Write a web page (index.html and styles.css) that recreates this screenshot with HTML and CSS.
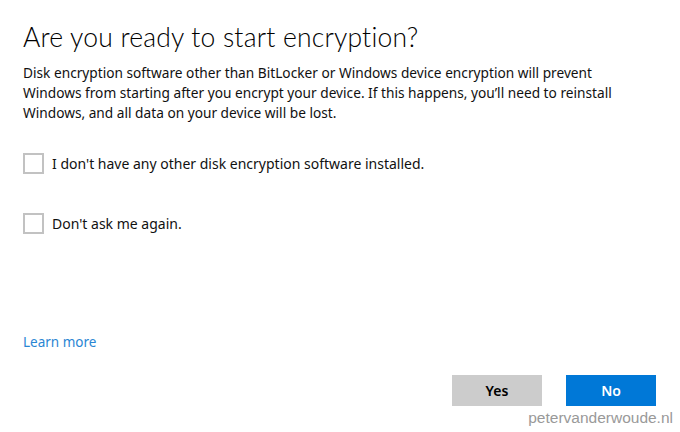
FILE: index.html
```html
<!DOCTYPE html>
<html>
<head>
<meta charset="utf-8">
<link rel="stylesheet" href="styles.css">
</head>
<body>
<div class="dialog">
  <h1 class="title">Are you ready to start encryption?</h1>
  <p class="desc">Disk encryption software other than BitLocker or Windows device encryption will prevent Windows from starting after you encrypt your device. If this happens, you’ll need to reinstall Windows, and all data on your device will be lost.</p>
  <div class="checks">
    <label class="check"><span class="box"></span><span class="label">I don't have any other disk encryption software installed.</span></label>
    <label class="check"><span class="box"></span><span class="label">Don't ask me again.</span></label>
  </div>
  <a class="learn" href="#">Learn more</a>
  <div class="buttons">
    <button class="btn btn-yes">Yes</button>
    <button class="btn btn-no">No</button>
  </div>
  <div class="watermark">petervanderwoude.nl</div>
</div>
</body>
</html>
```
FILE: styles.css
```css
html, body {
  margin: 0;
  padding: 0;
  background: #ffffff;
}
.dialog {
  width: 680px;
  height: 432px;
  box-sizing: border-box;
  padding: 0 24px 0 23px;
  font-family: "Noto Sans", "Open Sans", sans-serif;
  color: #000000;
  display: flex;
  flex-direction: column;
}
.title {
  margin: 20px 0 0 0;
  font-family: "Lato", "Open Sans", sans-serif;
  font-weight: 300;
  font-size: 26.5px;
  line-height: 34px;
  color: #000;
  letter-spacing: 0.2px;
}
.desc {
  margin: 9px 0 0 0;
  max-width: 612px;
  font-size: 13.7px;
  line-height: 20px;
  color: #111;
}
.checks {
  display: flex;
  flex-direction: column;
  gap: 40px;
  margin-top: 30px;
}
.check {
  display: flex;
  align-items: center;
  gap: 8px;
  height: 20px;
}
.box {
  width: 17px;
  height: 17px;
  border: 2px solid #c2c2c2;
  flex: none;
}
.label {
  font-size: 14px;
  color: #111;
}
.learn {
  margin-top: 100px;
  font-size: 13.5px;
  color: #2a86d3;
  text-decoration: none;
  align-self: flex-start;
}
.buttons {
  display: flex;
  justify-content: flex-end;
  gap: 24px;
  margin-top: 24px;
  padding-right: 0;
}
.btn {
  width: 90px;
  height: 31px;
  border: none;
  font-family: "Noto Sans", "Open Sans", sans-serif;
  font-size: 14px;
  font-weight: 600;
  padding: 0;
}
.btn-yes {
  background: #cccccc;
  color: #000;
}
.btn-no {
  background: #0078d7;
  color: #fff;
}
.watermark {
  align-self: flex-end;
  margin-top: 3px;
  margin-right: -17px;
  font-family: "Liberation Sans", sans-serif;
  font-size: 15.5px;
  color: #999999;
  line-height: 18px;
}
```
